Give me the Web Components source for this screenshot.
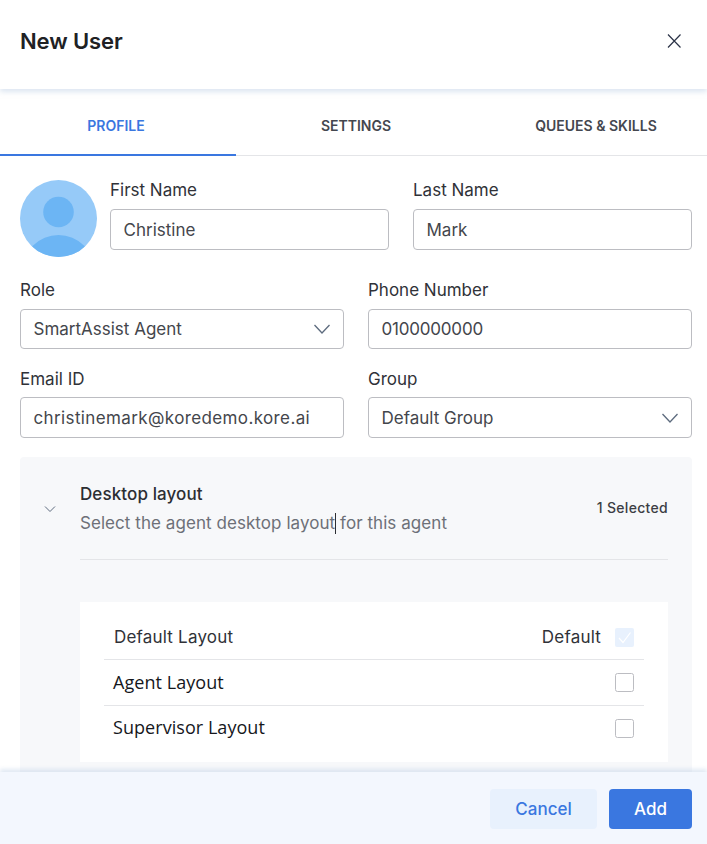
<!DOCTYPE html>
<html lang="en">
<head>
<meta charset="utf-8">
<title>New User</title>
<style>
  html, body { margin: 0; padding: 0; background: #fff; }
  body { font-family: Inter, "Liberation Sans", sans-serif; color: #202124; }
</style>
</head>
<body>
<user-modal>
  <modal-header slot="header">New User</modal-header>
  <tab-bar slot="tabs"></tab-bar>

  <div style="display:flex;gap:13px;padding-top:24px">
    <user-avatar></user-avatar>
    <div style="display:grid;grid-template-columns:279px 279px;column-gap:24px;flex:1">
      <form-field label="First Name" value="Christine" style="--ctl-h:41px"></form-field>
      <form-field label="Last Name" value="Mark" style="--ctl-h:41px"></form-field>
    </div>
  </div>
  <div style="display:grid;grid-template-columns:324px 324px;column-gap:24px;padding-top:23px">
    <form-field label="Role" value="SmartAssist Agent" select></form-field>
    <form-field label="Phone Number" value="0100000000" style="--value-ls:-.2px"></form-field>
  </div>
  <div style="display:grid;grid-template-columns:324px 324px;column-gap:24px;padding-top:20px">
    <form-field label="Email ID" value="christinemark@koredemo.kore.ai" style="--ctl-h:41px;--label-gap:8px;--value-ls:.38px"></form-field>
    <form-field label="Group" value="Default Group" select style="--ctl-h:41px;--label-gap:8px"></form-field>
  </div>

  <layout-panel title="Desktop layout" count="1 Selected">
    <layout-row name="Default Layout" tag="Default" checked></layout-row>
    <layout-row name="Agent Layout" system></layout-row>
    <layout-row name="Supervisor Layout" system last></layout-row>
  </layout-panel>

  <modal-footer slot="footer"></modal-footer>
</user-modal>

<script>
// Contenedor principal: cabecera, pestañas, cuerpo recortado y pie fijo
class UserModal extends HTMLElement {
  constructor() {
    super();
    this.attachShadow({ mode: 'open' });
    this.shadowRoot.innerHTML = `
      <style>
        :host { display: flex; flex-direction: column; width: 707px; height: 844px; overflow: hidden; background: #fff; }
        .body { flex: 1; min-height: 0; overflow: hidden; padding: 0 15px 0 20px; }
      </style>
      <slot name="header"></slot>
      <slot name="tabs"></slot>
      <div class="body"><slot></slot></div>
      <slot name="footer"></slot>
    `;
  }
}

class ModalHeader extends HTMLElement {
  constructor() {
    super();
    this.attachShadow({ mode: 'open' });
    this.shadowRoot.innerHTML = `
      <style>
        :host { display: flex; align-items: center; justify-content: space-between; height: 89px; box-sizing: border-box;
                padding: 0 25px 7px 20px; box-shadow: 0 3px 5px rgba(190, 208, 230, .5); position: relative; z-index: 1; }
        h1 { margin: 0; font: 600 22px/26px Inter, sans-serif; color: #202124; letter-spacing: -.1px; }
        svg { display: block; }
      </style>
      <h1><slot></slot></h1>
      <svg width="16" height="16" viewBox="0 0 16 16" fill="none" stroke="#2b3347" stroke-width="1.2">
        <path d="M2 1.5 14.5 14.5M14.5 1.5 2 14.5"/>
      </svg>
    `;
  }
}

class TabBar extends HTMLElement {
  constructor() {
    super();
    this.attachShadow({ mode: 'open' });
    this.shadowRoot.innerHTML = `
      <style>
        :host { display: grid; grid-template-columns: 236px 240px 231px; height: 61px; margin-top: 6px; box-sizing: border-box;
                border-bottom: 1px solid #e4e5e8; }
        div { display: flex; align-items: center; justify-content: center; font: 600 14px/16px Inter, sans-serif;
              color: #44474f; padding-top: 2px; }
        .on { color: #3a77e0; position: relative; padding-right: 4px; }
        .on::after { content: ""; position: absolute; left: 0; right: 0; bottom: -1px; height: 2px; background: #3a77e0; }
        .last { padding-left: 9px; }
      </style>
      <div class="on">PROFILE</div>
      <div>SETTINGS</div>
      <div class="last">QUEUES &amp; SKILLS</div>
    `;
  }
}

class UserAvatar extends HTMLElement {
  constructor() {
    super();
    this.attachShadow({ mode: 'open' });
    this.shadowRoot.innerHTML = `
      <style>:host { display: block; width: 77px; height: 77px; flex: none; } svg { display: block; }</style>
      <svg width="77" height="77" viewBox="0 0 77 77">
        <defs><clipPath id="c"><circle cx="38.5" cy="38.5" r="38.5"/></clipPath></defs>
        <circle cx="38.5" cy="38.5" r="38.5" fill="#96caf8"/>
        <circle cx="38.5" cy="32" r="15.3" fill="#6cb5f4"/>
        <circle cx="38.5" cy="91" r="36" fill="#6cb5f4" clip-path="url(#c)"/>
      </svg>
    `;
  }
}

// Campo con etiqueta: texto o desplegable según el atributo "select"
class FormField extends HTMLElement {
  connectedCallback() {
    const label = this.getAttribute('label');
    const value = this.getAttribute('value');
    const chevron = this.hasAttribute('select') ? `
      <svg width="18" height="10" viewBox="0 0 18 10" fill="none" stroke="#5d6b7e" stroke-width="1.3">
        <path d="M1.5 1 9 9 16.5 1"/>
      </svg>` : '';
    this.attachShadow({ mode: 'open' }).innerHTML = `
      <style>
        :host { display: block; min-width: 0; }
        label { display: block; font: 400 17px/20px Inter, sans-serif; color: #303238; margin-bottom: var(--label-gap, 9px); }
        .ctl { display: flex; align-items: center; justify-content: space-between; box-sizing: border-box;
               height: var(--ctl-h, 40px); padding: 0 12px 0 12.5px; border: 1px solid #bcbdc2; border-radius: 4px;
               font: 400 17px/20px Inter, sans-serif; color: #44464c; background: #fff; white-space: nowrap;
               letter-spacing: var(--value-ls, 0); }
        svg { display: block; flex: none; }
      </style>
      <label>${label}</label>
      <div class="ctl"><span>${value}</span>${chevron}</div>
    `;
  }
}

class LayoutPanel extends HTMLElement {
  connectedCallback() {
    this.attachShadow({ mode: 'open' }).innerHTML = `
      <style>
        :host { display: block; margin-top: 19px; background: #f7f8fa; border-radius: 4px 4px 0 0; height: 400px;
                padding: 26px 24px 0 27px; box-sizing: border-box; }
        .head { display: grid; grid-template-columns: 33px 1fr auto; align-items: center; padding-bottom: 25px; }
        .head svg { display: block; margin-left: -3px; }
        .title { font: 500 17px/22px Inter, sans-serif; color: #2c2e33; letter-spacing: .1px; }
        .sub { font: 400 17px/20px Inter, sans-serif; color: #6d7078; margin-top: 8px; white-space: nowrap; letter-spacing: .06px; }
        .caret { display: inline-block; width: 1px; height: 21px; background: #2c2e33; vertical-align: -5px; margin: 0 -1px 0 0; }
        .count { font: 500 14px/16px Inter, sans-serif; color: #3c3e44; margin-top: -2px; letter-spacing: .3px; }
        .rule { height: 1px; background: #e4e5e8; margin-left: 33px; }
        .box { margin: 42px 0 0 33px; background: #fff; padding: 13px 24px 0 24px; height: 160px; box-sizing: border-box; }
      </style>
      <div class="head">
        <svg width="12" height="8" viewBox="0 0 12 8" fill="none" stroke="#5d6b7e" stroke-width="1"><path d="M1 1.5 6 6.5 11 1.5"/></svg>
        <div>
          <div class="title">${this.getAttribute('title')}</div>
          <div class="sub">Select the agent desktop layout<span class="caret"></span> for this agent</div>
        </div>
        <div class="count">${this.getAttribute('count')}</div>
      </div>
      <div class="rule"></div>
      <div class="box"><slot></slot></div>
    `;
  }
}

class LayoutRow extends HTMLElement {
  connectedCallback() {
    const checked = this.hasAttribute('checked');
    const tag = this.getAttribute('tag');
    const box = checked
      ? `<svg width="19" height="19" viewBox="0 0 19 19"><rect width="19" height="19" rx="2" fill="#e8f1fd"/><path d="M4 10 8 14.5 15.5 4.5" fill="none" stroke="#fff" stroke-width="1.2"/></svg>`
      : `<svg width="19" height="19" viewBox="0 0 19 19"><rect x=".5" y=".5" width="18" height="18" rx="2" fill="#fff" stroke="#bcbdc2"/></svg>`;
    this.attachShadow({ mode: 'open' }).innerHTML = `
      <style>
        :host { display: flex; align-items: center; height: 45px; box-sizing: border-box; padding: 0 10px 0 10px; }
        :host(:not([last])) { border-bottom: 1px solid #e4e5e8; }
        :host([system]) { height: 46px; padding-left: 9px; }
        :host([last]) { height: 44px; }
        .name { flex: 1; font: 400 17px/20px Inter, sans-serif; color: #303238; letter-spacing: .2px; }
        :host([system]) .name { font: 400 18px/22px "Open Sans", sans-serif; color: #15171c; padding-bottom: 1px; letter-spacing: .05px; }
        :host([last]) .name { padding-bottom: 2px; }
        .tag { font: 400 17px/20px Inter, sans-serif; color: #303238; margin-right: 14px; letter-spacing: .2px; }
        svg { display: block; }
      </style>
      <span class="name">${this.getAttribute('name')}</span>
      ${tag ? `<span class="tag">${tag}</span>` : ''}
      ${box}
    `;
  }
}

class ModalFooter extends HTMLElement {
  constructor() {
    super();
    this.attachShadow({ mode: 'open' });
    this.shadowRoot.innerHTML = `
      <style>
        :host { display: flex; justify-content: flex-end; gap: 12px; height: 72px; padding: 17px 15px 0 0; box-sizing: border-box;
                background: #f3f7fe; box-shadow: 0 -3px 4px rgba(190, 208, 230, .45); position: relative; z-index: 1; }
        button { height: 40px; border: 0; border-radius: 4px; font: 500 17px/20px Inter, sans-serif; padding: 0; }
        .cancel { width: 107px; background: #e8f1fd; color: #3a77e0; }
        .add { width: 83px; background: #3a77e0; color: #fff; }
      </style>
      <button class="cancel">Cancel</button>
      <button class="add">Add</button>
    `;
  }
}

customElements.define('user-modal', UserModal);
customElements.define('modal-header', ModalHeader);
customElements.define('tab-bar', TabBar);
customElements.define('user-avatar', UserAvatar);
customElements.define('form-field', FormField);
customElements.define('layout-panel', LayoutPanel);
customElements.define('layout-row', LayoutRow);
customElements.define('modal-footer', ModalFooter);
</script>
</body>
</html>
